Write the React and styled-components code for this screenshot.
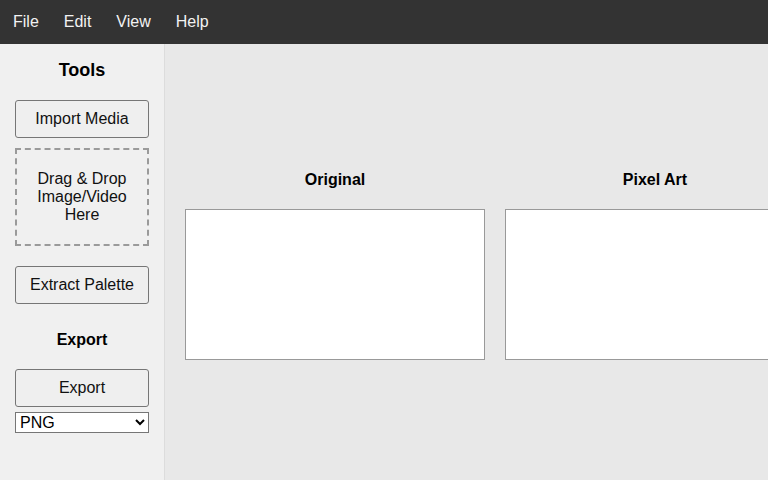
import styled, { createGlobalStyle } from "styled-components";

const GlobalStyle = createGlobalStyle`
  html, body {
    margin: 0;
    padding: 0;
    height: 100%;
  }
  body {
    font-family: "Liberation Sans", Arial, sans-serif;
    font-size: 16px;
    color: #000;
    overflow: hidden;
  }
  #root {
    height: 100%;
  }
`

const Page = styled.div`
  display: flex;
  flex-direction: column;
  height: 100vh;
`

const MenuBar = styled.nav`
  display: flex;
  align-items: center;
  height: 44px;
  padding-left: 0.5px;
  background: #333333;
  flex-shrink: 0;
`

const MenuItem = styled.span`
  padding: 0 12.5px;
  color: #f2f2f2;
  font-size: 16px;
  cursor: default;
`

const Body = styled.div`
  display: flex;
  flex: 1;
  min-height: 0;
`

const Sidebar = styled.aside`
  display: flex;
  flex-direction: column;
  width: 134px;
  padding: 16px 15px;
  background: #f0f0f0;
  border-right: 1px solid #dcdcdc;
  flex-shrink: 0;
`

const SideTitle = styled.h3`
  margin: 0 0 ${(p) => p.$after}px;
  margin-top: ${(p) => p.$before || 0}px;
  font-size: ${(p) => p.$size}px;
  font-weight: bold;
  text-align: center;
`

const ToolButton = styled.button`
  height: 38px;
  margin-bottom: ${(p) => p.$after || 0}px;
  padding: 0;
  font-family: "Liberation Sans", Arial, sans-serif;
  font-size: 16px;
  color: #111;
  background: #efefef;
  border: 1px solid #767676;
  border-radius: 3px;
`

const DropZone = styled.div`
  display: flex;
  align-items: center;
  justify-content: center;
  height: 94px;
  margin: 10px 0 20px;
  border: 2px dashed #9a9a9a;
  text-align: center;
  line-height: 18px;
  color: #111;
`

const FormatSelect = styled.select`
  width: 134px;
  height: 21px;
  margin-top: 5px;
  font-family: "Liberation Sans", Arial, sans-serif;
  font-size: 16px;
  background: #fff;
  border: 1px solid #767676;
  border-radius: 0;
`

const Workspace = styled.main`
  display: flex;
  align-items: center;
  gap: 20px;
  flex: 1;
  padding: 6px 20px 0;
  background: #e8e8e8;
  overflow: hidden;
`

const Panel = styled.section`
  display: flex;
  flex-direction: column;
  width: 300px;
  flex-shrink: 0;
`

const PanelTitle = styled.h3`
  margin: 0 0 20px;
  font-size: 16px;
  font-weight: bold;
  text-align: center;
  line-height: 18px;
`

const Canvas = styled.div`
  height: 151px;
  background: #fff;
  border: 1px solid #999;
  box-sizing: border-box;
`

export default function App() {
  const menus = ["File", "Edit", "View", "Help"];
  const panels = ["Original", "Pixel Art"];

  return (
    <Page>
      <GlobalStyle />
      <MenuBar>
        {menus.map((m) => (
          <MenuItem key={m}>{m}</MenuItem>
        ))}
      </MenuBar>
      <Body>
        <Sidebar>
          <SideTitle $size={18} $after={19}>Tools</SideTitle>
          <ToolButton>Import Media</ToolButton>
          <DropZone>
            Drag &amp; Drop
            <br />
            Image/Video
            <br />
            Here
          </DropZone>
          <ToolButton>Extract Palette</ToolButton>
          <SideTitle $size={16} $before={27} $after={20}>Export</SideTitle>
          <ToolButton>Export</ToolButton>
          <FormatSelect defaultValue="png">
            <option value="png">PNG</option>
            <option value="gif">GIF</option>
            <option value="mp4">MP4</option>
          </FormatSelect>
        </Sidebar>
        <Workspace>
          {panels.map((p) => (
            <Panel key={p}>
              <PanelTitle>{p}</PanelTitle>
              <Canvas />
            </Panel>
          ))}
        </Workspace>
      </Body>
    </Page>
  );
}
